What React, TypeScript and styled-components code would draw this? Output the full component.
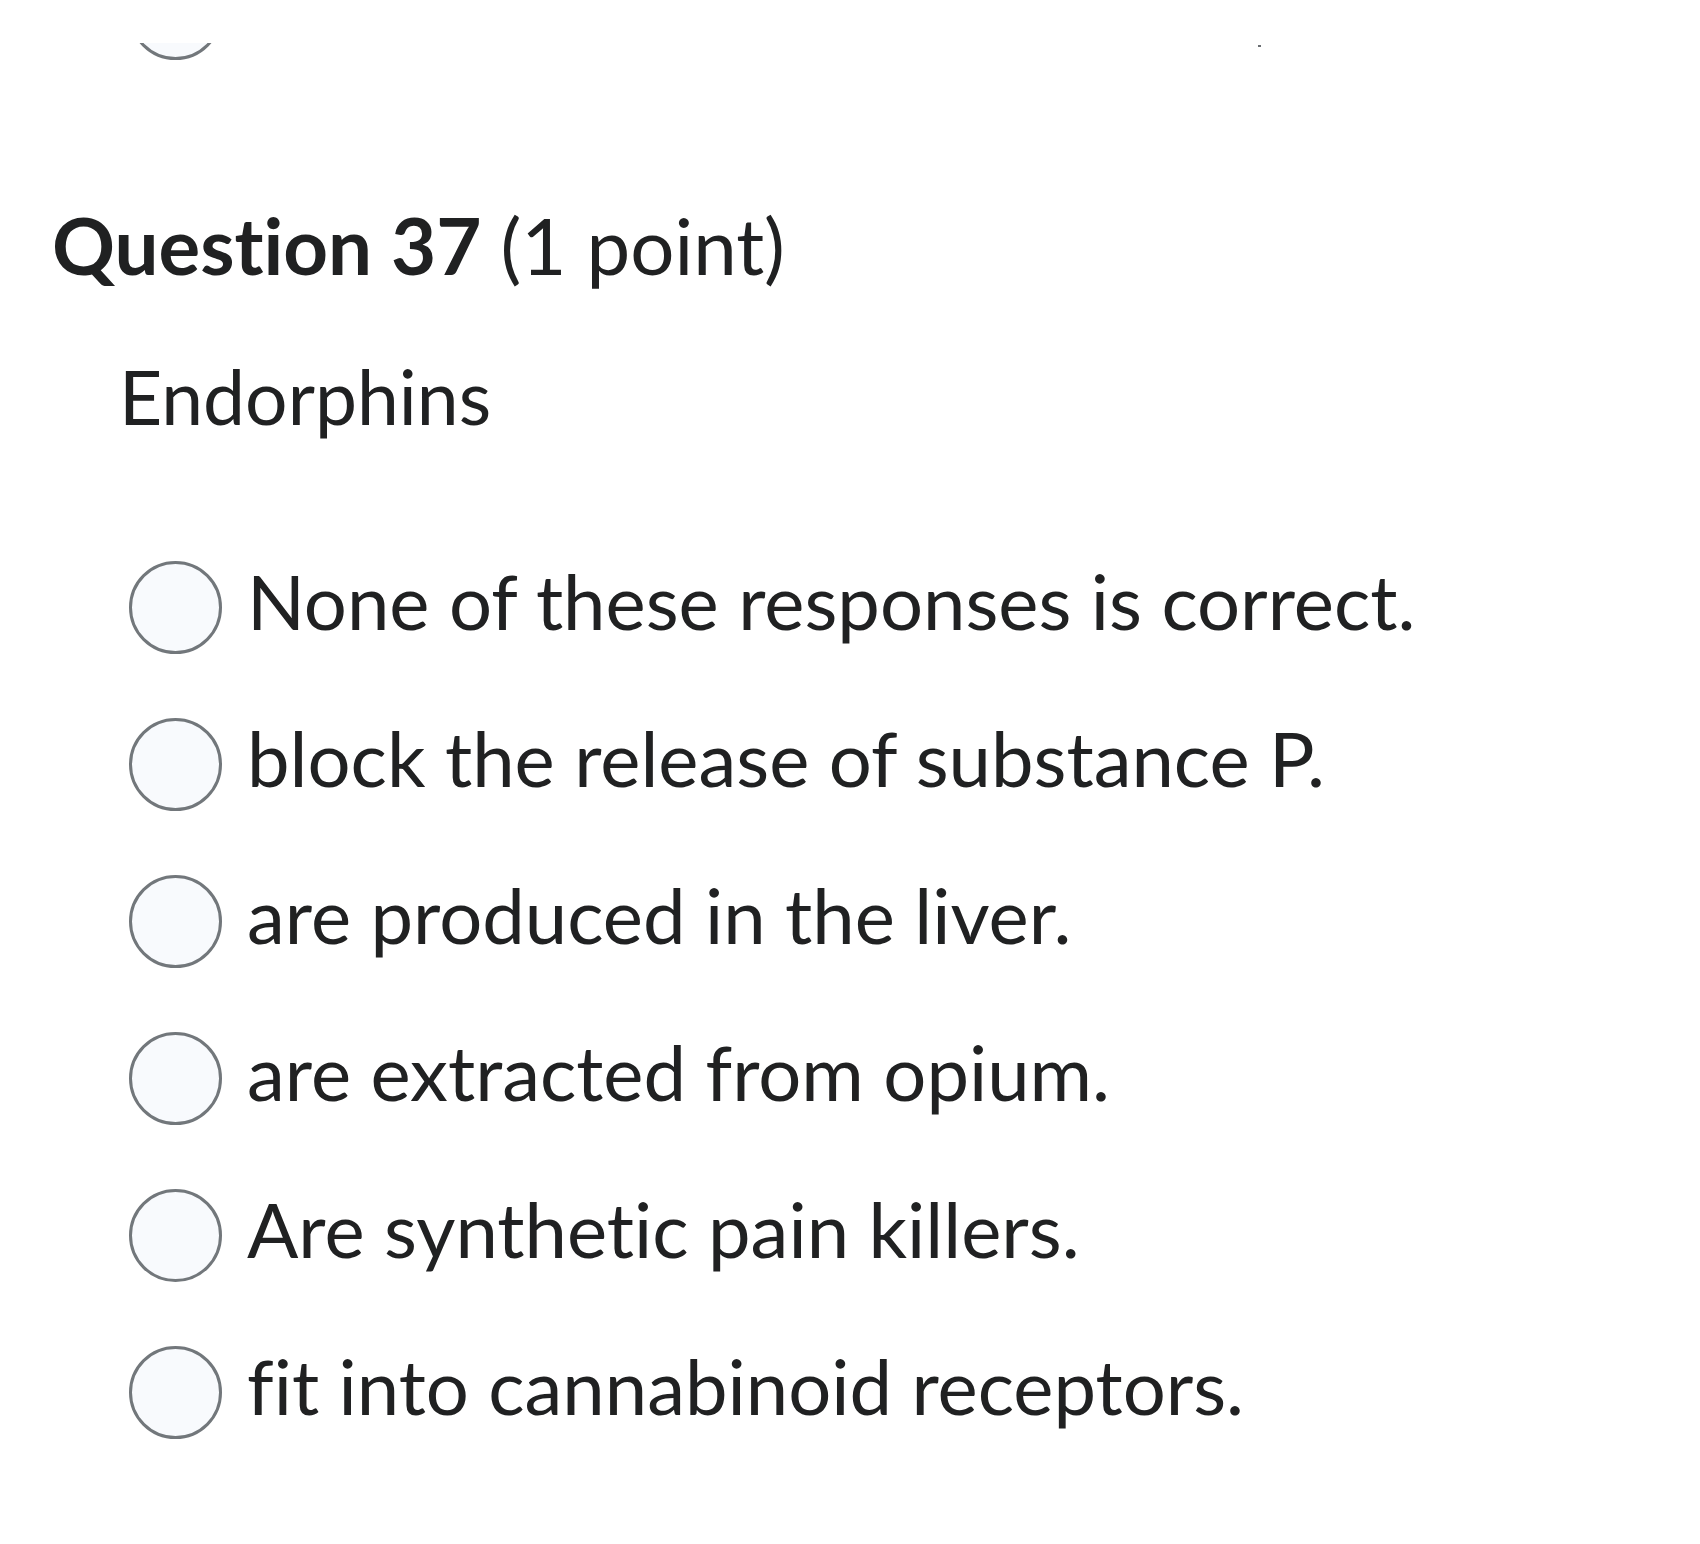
import React from "react";
import styled, { createGlobalStyle } from "styled-components";

const GlobalStyle = createGlobalStyle`
  html, body {
    margin: 0;
    padding: 0;
    background: #ffffff;
  }
  body {
    font-family: Lato, "Open Sans", "Liberation Sans", sans-serif;
    font-variant-ligatures: none;
    font-feature-settings: "liga" 0, "clig" 0;
    color: #202122;
  }
`;

const Page = styled.div`
  width: 1700px;
  height: 1544px;
  overflow: hidden;
  background: #fff;
`;

const TopStrip = styled.div`
  display: flex;
  align-items: flex-start;
  padding-top: 43px;
  height: 17px;
`;

const ClipBox = styled.div`
  margin-left: 129px;
  width: 94px;
  height: 17px;
  overflow: hidden;
`;

const Radio = styled.span<{ $pull?: number }>`
  display: block;
  flex: none;
  box-sizing: border-box;
  width: 93px;
  height: 93px;
  border-radius: 50%;
  border: 3px solid #72777b;
  background: #f8fafd;
  margin-top: ${(p) => (p.$pull ? `-${p.$pull}px` : "0")};
`;

const Dash = styled.span`
  display: block;
  margin-left: 1035px;
  margin-top: 2px;
  width: 3px;
  height: 2px;
  background: #6a6e72;
`;

const Heading = styled.h2`
  margin: 146px 0 0 52px;
  font-size: 78px;
  line-height: 1;
  font-weight: 700;
  color: #202122;
  span {
    font-weight: 400;
  }
`;

const Prompt = styled.p`
  margin: 75px 0 0 119px;
  font-size: 75px;
  line-height: 1;
  font-weight: 400;
  color: #202122;
`;

const Options = styled.ul`
  list-style: none;
  margin: 95px 0 0 0;
  padding: 0 0 0 129px;
  display: flex;
  flex-direction: column;
`;

const Option = styled.li`
  display: flex;
  align-items: center;
  height: 157px;
  gap: 25px;
`;

const Label = styled.span`
  font-size: 76px;
  line-height: 1;
  padding-bottom: 13px;
  color: #202122;
  white-space: nowrap;
`;

const answers = [
  "None of these responses is correct.",
  "block the release of substance P.",
  "are produced in the liver.",
  "are extracted from opium.",
  "Are synthetic pain killers.",
  "fit into cannabinoid receptors.",
];

export default function App() {
  return (
    <Page>
      <GlobalStyle />
      <TopStrip>
        <ClipBox>
          <Radio $pull={76} />
        </ClipBox>
        <Dash />
      </TopStrip>
      <Heading>
        Question 37 <span>(1 point)</span>
      </Heading>
      <Prompt>Endorphins</Prompt>
      <Options>
        {answers.map((a) => (
          <Option key={a}>
            <Radio />
            <Label>{a}</Label>
          </Option>
        ))}
      </Options>
    </Page>
  );
}
